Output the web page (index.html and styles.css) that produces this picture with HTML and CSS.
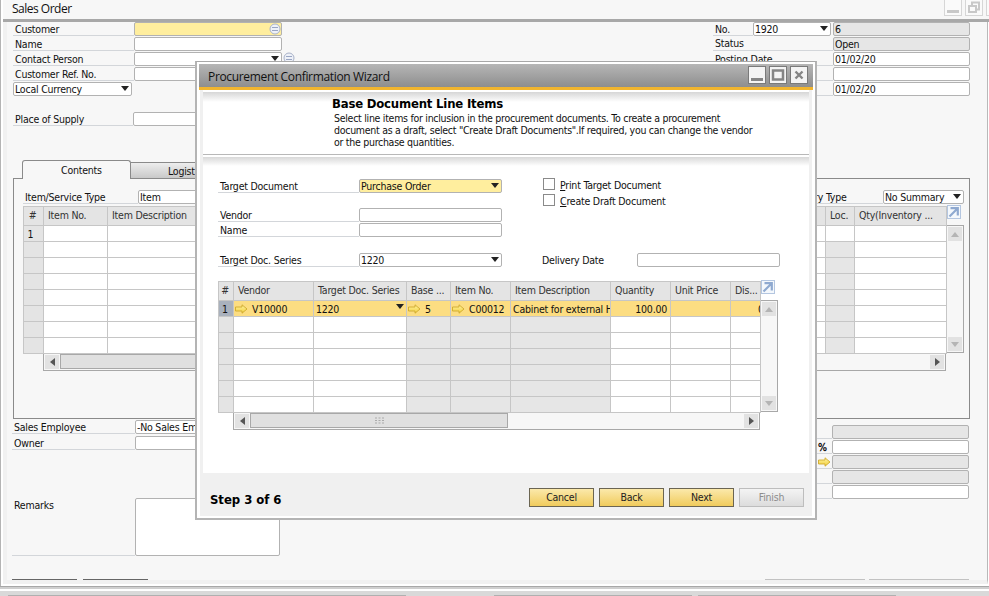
FILE: index.html
```
<!DOCTYPE html>
<html lang="en">
<head>
    <meta charset="UTF-8">
    <meta name="viewport" content="width=device-width, initial-scale=1.0">
    <title>Sales Order</title>
    <link rel="stylesheet" href="styles.css">
</head>
<body>
    <svg class="defs" width="0" height="0">
        <defs>
            <linearGradient id="gold" x1="0" y1="0" x2="0" y2="1">
                <stop offset="0" stop-color="#fff3a0"/>
                <stop offset="1" stop-color="#f2cf3c"/>
            </linearGradient>
        </defs>
        <symbol id="link" viewBox="0 0 13 10">
            <path d="M0.5 3h6.5V0.8L12 5L7 9.2V7H0.5z" fill="url(#gold)" stroke="#cfa92c" stroke-width="0.9"/>
        </symbol>
        <symbol id="expand" viewBox="0 0 14 14">
            <rect x="0.5" y="0.5" width="13" height="13" fill="#f4f8fc" stroke="#b4c6e0"/>
            <path d="M2.5 11.5L10 4M3.500 3.200h7.300V10.500" fill="none" stroke="#8fa9d0" stroke-width="2.200"/>
        </symbol>
        <symbol id="pick" viewBox="0 0 12 12">
            <circle cx="6" cy="6" r="5" fill="#eef1f8" stroke="#a9b2c8"/>
            <path d="M3 4.500h6M3 7.500h6" stroke="#9aa6c4" fill="none"/>
        </symbol>
    </svg>

    <div class="window">
        <div class="window_title">
            <span>Sales Order</span>
            <div class="ghost_btns">
                <i><svg width="18" height="17"><path d="M3 11.5h12" stroke="#c8c8c8" stroke-width="3"/></svg></i>
                <i><svg width="18" height="17"><path d="M7 5V2.500h7v7h-3M4 6h7v6h-7z" fill="none" stroke="#c8c8c8" stroke-width="2"/></svg></i>
                <i></i>
            </div>
        </div>
        <div class="window_body">
            <div class="header">
                <div class="header_left">
                    <div class="row"><label>Customer</label><div class="field active"><svg class="pick" width="12" height="12"><use href="#pick"/></svg></div></div>
                    <div class="row"><label>Name</label><div class="field"></div></div>
                    <div class="row"><label>Contact Person</label><div class="field combo"></div><svg class="pick_out" width="12" height="12"><use href="#pick"/></svg></div>
                    <div class="row"><label>Customer Ref. No.</label><div class="field"></div></div>
                    <div class="row"><div class="field combo currency">Local Currency</div></div>
                    <div class="row supply"><label>Place of Supply</label><div class="field"></div></div>
                </div>
                <div class="header_right">
                    <div class="row"><label class="short">No.</label><div class="field combo number">1920</div><div class="field off">6</div></div>
                    <div class="row"><label class="up">Status</label><div class="field off">Open</div></div>
                    <div class="row"><label>Posting Date</label><div class="field">01/02/20</div></div>
                    <div class="row"><label></label><div class="field"></div></div>
                    <div class="row"><label></label><div class="field">01/02/20</div></div>
                </div>
            </div>

            <div class="tabs">
                <div class="tab tab_on">Contents</div>
                <div class="tab">Logistics</div>
            </div>
            <div class="panel">
                <div class="panel_top">
                    <label>Item/Service Type</label>
                    <div class="field">Item</div>
                    <label class="summary">Summary Type</label>
                    <div class="field combo">No Summary</div>
                </div>
                <div class="grid_wrap">
                    <div>
                        <table class="grid" id="items">
                            <colgroup><col style="width:20px"><col style="width:64px"><col style="width:718px"><col style="width:29px"><col style="width:92px"></colgroup>
                            <tr><th class="num">#</th><th>Item No.</th><th>Item Description</th><th>Loc.</th><th>Qty(Inventory ...</th></tr>
                            <tr><td class="num">1</td><td></td><td></td><td></td><td></td></tr>
                        </table>
                        <div class="hscroll hscroll_items"><b class="left"></b><span class="thumb"></span><b class="right"></b></div>
                    </div>
                    <div class="side">
                        <svg width="14" height="14"><use href="#expand"/></svg>
                        <div class="vscroll vscroll_items"><b class="up_arrow"></b><b class="down_arrow"></b></div>
                    </div>
                </div>
            </div>

            <div class="footer">
                <div class="footer_left">
                    <div class="row"><label>Sales Employee</label><div class="field">-No Sales Employee-</div></div>
                    <div class="row owner"><label>Owner</label><div class="field"></div></div>
                    <div class="row remarks"><label>Remarks</label><div class="field"></div></div>
                </div>
                <div class="footer_right">
                    <div class="row"><label></label><div class="field off"></div></div>
                    <div class="row"><label>%</label><div class="field"></div></div>
                    <div class="row"><label><svg width="13" height="10"><use href="#link"/></svg></label><div class="field off"></div></div>
                    <div class="row"><label></label><div class="field off"></div></div>
                    <div class="row"><label></label><div class="field"></div></div>
                </div>
            </div>
            <div class="cut_btns"><i></i><i></i><i class="light first"></i><i class="light"></i></div>
        </div>
    </div>
    <div class="taskbar"><i></i><i></i><i></i></div>

    <div class="dialog">
        <div class="dialog_title">
            <span>Procurement Confirmation Wizard</span>
            <div class="win_btns">
                <i><svg width="16" height="16"><path d="M2 12.500h12" stroke="#858585" stroke-width="3"/></svg></i>
                <i><svg width="16" height="16"><path d="M3 3.500h10v9h-10z" fill="none" stroke="#858585" stroke-width="2.500"/></svg></i>
                <i><svg width="16" height="16"><path d="M4.500 4.500l7 7M11.500 4.500l-7 7" stroke="#858585" stroke-width="2.400"/></svg></i>
            </div>
        </div>
        <div class="dialog_body">
            <div class="intro">
                <h1>Base Document Line Items</h1>
                <p>Select line items for inclusion in the procurement documents. To create a procurement<br>document as a draft, select "Create Draft Documents".If required, you can change the vendor<br>or the purchase quantities.</p>
            </div>
            <div class="wizard">
                <div class="form">
                    <div class="form_left">
                        <div class="row"><label>Target Document</label><div class="field combo active">Purchase Order</div></div>
                        <div class="row vendor"><label>Vendor</label><div class="field"></div></div>
                        <div class="row"><label>Name</label><div class="field"></div></div>
                        <div class="row series"><label>Target Doc. Series</label><div class="field combo">1220</div></div>
                    </div>
                    <div class="form_right">
                        <div class="check"><i></i><span><u>P</u>rint Target Document</span></div>
                        <div class="check"><i></i><span><u>C</u>reate Draft Document</span></div>
                        <div class="row delivery"><label>Delivery Date</label><div class="field"></div></div>
                    </div>
                </div>
                <div class="grid_wrap">
                    <div>
                        <table class="grid" id="lines">
                            <colgroup><col style="width:15px"><col style="width:80px"><col style="width:93px"><col style="width:44px"><col style="width:60px"><col style="width:100px"><col style="width:60px"><col style="width:60px"><col style="width:30px"></colgroup>
                            <tr><th class="num">#</th><th>Vendor</th><th>Target Doc. Series</th><th>Base ...</th><th>Item No.</th><th>Item Description</th><th>Quantity</th><th>Unit Price</th><th>Dis...</th></tr>
                            <tr class="selected">
                                <td class="num">1</td>
                                <td><svg width="13" height="10"><use href="#link"/></svg>V10000</td>
                                <td class="combo">1220</td>
                                <td><svg width="13" height="10"><use href="#link"/></svg>5</td>
                                <td><svg width="13" height="10"><use href="#link"/></svg>C00012</td>
                                <td>Cabinet for external HD</td>
                                <td class="amount">100.00</td>
                                <td></td>
                                <td class="clip">0.00</td>
                            </tr>
                        </table>
                        <div class="hscroll hscroll_lines"><b class="left"></b><span class="thumb"><svg width="9" height="7"><path d="M0 1h9M0 3.500h9M0 6h9" stroke="#aaa" stroke-dasharray="2 1.500"/></svg></span><b class="right"></b></div>
                    </div>
                    <div class="side">
                        <svg width="14" height="14"><use href="#expand"/></svg>
                        <div class="vscroll vscroll_lines"><b class="up_arrow"></b><b class="down_arrow"></b></div>
                    </div>
                </div>
            </div>
            <div class="steps">
                <strong>Step 3 of 6</strong>
                <button>Cancel</button>
                <button>Back</button>
                <button>Next</button>
                <button disabled>Finish</button>
            </div>
        </div>
    </div>

<script>
    //fill a grid with empty rows, gray = read only columns
    function fillRows(id, count, gray){
        var table = document.getElementById(id);
        var cols = table.getElementsByTagName("col").length;
        for(var i = 0; i < count; i++){
            var tr = document.createElement("tr");
            for(var j = 0; j < cols; j++){
                var td = document.createElement("td");
                if(j == 0){
                    td.className = "num";
                }else if(gray.indexOf(j) != -1){
                    td.className = "gray";
                }
                tr.appendChild(td);
            }
            table.appendChild(tr);
        }
    }
    fillRows("items", 7, [3]);
    fillRows("lines", 6, [3, 4, 5]);
</script>
</body>
</html>
```
FILE: styles.css
```
*{
    margin: 0;
    padding: 0;
    box-sizing: border-box;
}
body{
    width: 989px;
    height: 596px;
    overflow: hidden;
    position: relative;
    background: #fff;
    color: #111;
    font: 10.5px/14px "DejaVu Sans Condensed", "DejaVu Sans", sans-serif;
    font-stretch: condensed;
    letter-spacing: -0.22px;
    white-space: nowrap;
}
i{
    display: block;
}
svg{
    display: block;
    flex: none;
}
.defs{
    position: absolute;
}

/* main window */
.window{
    height: 586px;
    padding-left: 2px;
    border-left: 1px solid #b4b4b4;
    background: #fff;
    display: flex;
    flex-direction: column;
}
.window_title{
    height: 22px;
    padding-left: 9px;
    border-bottom: 3px solid #a8a8a8;
    background: #f7f7f7;
    display: flex;
    justify-content: space-between;
    font: 12px/18px "Open Sans", sans-serif;
    letter-spacing: -0.5px;
}
.ghost_btns{
    display: flex;
    gap: 3px;
    margin-right: -15px;
}
.ghost_btns i{
    width: 18px;
    height: 16px;
    border: 1px solid #d6d6d6;
    border-top: 0;
    background: #fafafa;
}
.ghost_btns svg{
    margin-left: -1px;
}
.window_body{
    height: 562px;
    width: 985px;
    padding-left: 6px;
    border-left: 4px solid #f1f1f1;
    border-right: 1px solid #b9b9b9;
    border-bottom: 4px solid #f1f1f1;
    background: #f7f7f7;
}
.row{
    display: flex;
    height: 14px;
    margin-bottom: 1px;
}
.row label{
    height: 14px;
    padding-left: 2px;
    border-bottom: 1px solid #d3d6da;
    line-height: 15px;
    flex: none;
}
.row label.up{
    line-height: 13px;
}
.field{
    height: 14px;
    padding-left: 1px;
    border: 1px solid #b2b2b2;
    border-radius: 2px;
    background: #fff;
    line-height: 13px;
    overflow: hidden;
    flex: none;
}
.off{
    background: #e6e6e6;
}
.active{
    background: #ffee9e;
}
.combo{
    position: relative;
}
.combo::after{
    content: "";
    position: absolute;
    right: 2px;
    top: 3px;
    border: 4px solid transparent;
    border-top: 5px solid #222;
    border-bottom: 0;
}
.header{
    height: 138px;
    display: flex;
    justify-content: space-between;
    padding-right: 17px;
}
.header_left label{
    width: 121px;
}
.header_left .field{
    width: 148px;
}
.pick{
    margin: 0 0 0 auto;
}
.pick_out{
    margin: 0 0 0 1px;
}
.header_left .currency{
    width: 119px;
}
.header_left .supply{
    margin-top: 16px;
}
.header_left .supply label{
    width: 120px;
}
.header_right label{
    width: 120px;
}
.header_right .short{
    width: 40px;
}
.header_right .field{
    width: 137px;
}
.header_right .number{
    width: 78px;
    margin-right: 2px;
}

/* tabs */
.tabs{
    display: flex;
    align-items: flex-end;
    height: 19px;
    margin: 0 0 -1px 9px;
}
.tab{
    width: 109px;
    height: 17px;
    padding-left: 37px;
    border: 1px solid #8a8a8a;
    border-left: 0;
    background: linear-gradient(#ededed, #c9c9c9);
    line-height: 16px;
}
.tab_on{
    height: 19px;
    padding-left: 38px;
    border-left: 1px solid #8a8a8a;
    border-bottom: 0;
    border-radius: 3px 3px 0 0;
    background: #f7f7f7;
    line-height: 19px;
}
.panel{
    width: 957px;
    height: 241px;
    padding: 11px 0 0 9px;
    border: 1px solid #8a8a8a;
}
.panel_top{
    display: flex;
    height: 16px;
}
.panel_top label{
    width: 115px;
    height: 14px;
    padding-left: 2px;
    border-bottom: 1px solid #d3d6da;
    line-height: 15px;
}
.panel_top .field{
    width: 140px;
}
.panel_top .summary{
    width: 104px;
    margin-left: auto;
    padding-left: 0;
}
.panel_top .combo{
    width: 81px;
    margin-right: 5px;
}

/* grids */
.grid_wrap{
    display: flex;
}
.grid{
    border-collapse: collapse;
    table-layout: fixed;
    width: 1px;
}
.grid th, .grid td{
    height: 16px;
    padding: 0 0 0 2px;
    border: 1px solid #c6c6c6;
    background: #fff;
    line-height: 14px;
    text-align: left;
    font-weight: normal;
    overflow: hidden;
}
.grid th{
    height: 19px;
    padding: 0 0 2px 4px;
    background: #e4e4e4;
    color: #333;
}
.grid .num{
    padding: 0;
    background: #e4e4e4;
    text-align: center;
}
.grid th.num{
    padding: 0 2px 2px 0;
}
.grid td.num{
    padding-right: 6px;
}
.grid .gray{
    background: #e6e6e6;
}
.grid .selected td{
    background: #fcdd82;
}
.grid .selected .num{
    padding-right: 2px;
    background: #a9b1bd;
}
.selected svg{
    display: inline-block;
    margin: 0 4px 0 -1px;
    vertical-align: -1px;
}
.grid .amount{
    padding-right: 3px;
    text-align: right;
}
.grid .clip{
    padding-left: 27px;
}
.hscroll{
    display: flex;
    height: 17px;
    padding: 0 1px 1px;
    border: 1px solid #a8a8a8;
    border-top: 0;
    background: #f7f7f7;
}
.hscroll b, .vscroll b{
    width: 14px;
    height: 14px;
    margin-top: 1px;
    background: #e2e2e2;
    display: flex;
    align-items: center;
    justify-content: center;
}
.hscroll b::after, .vscroll b::after{
    content: "";
    border: 4px solid transparent;
}
.hscroll .left::after{
    border-right: 5px solid #555;
    border-left: 0;
}
.hscroll .right{
    margin-left: auto;
}
.hscroll .right::after{
    border-left: 5px solid #555;
    border-right: 0;
}
.thumb{
    height: 15px;
    margin-left: 1px;
    border: 1px solid #a8a8a8;
    background: #e0e0e0;
    display: flex;
    align-items: center;
    justify-content: center;
}
.hscroll_items{
    width: 903px;
    margin-left: 20px;
}
.hscroll_items .thumb{
    width: 400px;
}
.hscroll_lines{
    width: 527px;
    margin-left: 15px;
}
.hscroll_lines .thumb{
    width: 258px;
}
.vscroll{
    display: flex;
    flex-direction: column;
    justify-content: space-between;
    width: 17px;
    padding: 0 1px 1px;
    border: 1px solid #a8a8a8;
    border-left: 0;
    background: #f7f7f7;
}
.vscroll .up_arrow::after{
    border-bottom: 5px solid #b4b4b4;
    border-top: 0;
}
.vscroll .down_arrow::after{
    border-top: 5px solid #b4b4b4;
    border-bottom: 0;
}
.side svg{
    margin-top: -1px;
}
.vscroll_items{
    height: 128px;
    margin-top: 6px;
}
.vscroll_lines{
    height: 112px;
    margin-top: 6px;
}

/* footer */
.footer{
    display: flex;
    justify-content: space-between;
    height: 160px;
    padding: 1px 18px 0 0;
    margin-left: -1px;
}
.footer_left label{
    width: 123px;
}
.footer_left .field{
    width: 145px;
}
.footer_left .owner{
    margin-top: 2px;
}
.footer_left .remarks{
    height: 58px;
    margin-top: 48px;
}
.remarks label, .remarks .field{
    height: 58px;
}
.footer_right{
    padding-top: 5px;
}
.footer_right label{
    width: 36px;
    padding-left: 22px;
    color: #000;
    -webkit-text-stroke: 0.3px #000;
}
.footer_right svg{
    margin-top: 2px;
}
.footer_right .field{
    width: 137px;
}
.cut_btns{
    display: flex;
    height: 1px;
    padding-right: 18px;
    margin-left: -1px;
}
.cut_btns i{
    width: 65px;
    margin-right: 6px;
    background: #666;
}
.cut_btns .light{
    width: 100px;
    margin-right: 0;
    background: #c2c2c2;
}
.cut_btns .first{
    margin: 0 4px 0 auto;
}
.taskbar{
    display: flex;
    gap: 6px;
    height: 10px;
    padding: 9px 0 0 8px;
    background: linear-gradient(#a8a8a8 1px, #cfcfcf 1px, #cfcfcf 3px, #fff 3px, #fff 5px, #d9d9d9 5px);
}
.taskbar i{
    width: 198px;
    background: #b0b0b0;
}
.taskbar i:first-child{
    width: 398px;
    margin-right: 82px;
}

/* wizard dialog, lies over the order form */
.dialog{
    position: absolute;
    left: 195px;
    top: 61px;
    width: 622px;
    height: 459px;
    padding: 2px;
    border: 1px solid #a8a8a8;
    border-left: 2px solid #b4b4b4;
    border-right: 2px solid #b4b4b4;
    border-bottom: 2px solid #b4b4b4;
    background: #fff;
}
.dialog_title{
    display: flex;
    justify-content: space-between;
    height: 26px;
    padding: 2px 5px 0 9px;
    border-bottom: 3px solid #f1b52f;
    background: linear-gradient(#b6b6b6, #8e8e8e);
    font: 12px/22px "Open Sans", sans-serif;
    letter-spacing: -0.34px;
}
.win_btns{
    display: flex;
    gap: 3px;
}
.win_btns i{
    width: 18px;
    height: 18px;
    border: 1px solid #7a7a7a;
    background: #f4f4f4;
}
.dialog_body{
    height: 426px;
    margin: 0 1px;
    padding: 0 3px;
    background: #f0f0f0;
}
.intro{
    height: 65px;
    padding: 5px 0 0 129px;
    border-top: 2px solid #fff;
    border-bottom: 1px solid #b8b8b8;
    background: linear-gradient(#d6d6d6, #fff 10px);
}
.intro h1{
    font-size: 13px;
    line-height: 13px;
    color: #000;
    letter-spacing: -0.2px;
}
.intro p{
    padding: 2px 0 0 2px;
    line-height: 12px;
    letter-spacing: -0.28px;
}
.wizard{
    height: 318px;
    padding: 22px 0 0 15px;
    border-top: 2px solid #fff;
    background: linear-gradient(#d8d8d8, #fff 9px);
}
.form{
    display: flex;
    height: 102px;
}
.form_left{
    width: 284px;
}
.form_left label{
    width: 141px;
}
.form_left .field, .form_right .field{
    width: 143px;
}
.form_left .vendor{
    margin-top: 15px;
}
.form_left .series{
    margin-top: 16px;
}
.form_right{
    margin: -1px 0 0 39px;
}
.check{
    display: flex;
    height: 16px;
    margin-left: 2px;
}
.check i{
    width: 12px;
    height: 12px;
    margin-right: 5px;
    border: 1px solid #8a8a8a;
    background: #fff;
}
.delivery{
    margin-top: 43px;
}
.delivery label{
    width: 96px;
    padding-left: 1px;
    border: 0;
}
.steps{
    display: flex;
    gap: 5px;
    height: 43px;
    padding: 15px 5px 0 7px;
}
.steps strong{
    margin-right: auto;
    font-size: 13px;
    line-height: 23px;
    letter-spacing: -0.05px;
    color: #000;
}
.steps button{
    width: 65px;
    height: 19px;
    border: 1px solid #6b6552;
    background: linear-gradient(#fbe9ab, #f0cb5c);
    color: #222;
    font: inherit;
    letter-spacing: inherit;
    line-height: 15px;
}
.steps button:disabled{
    border-color: #bdbdbd;
    background: linear-gradient(#f4f4f4, #dcdcdc);
    color: #8c8c8c;
}
```
